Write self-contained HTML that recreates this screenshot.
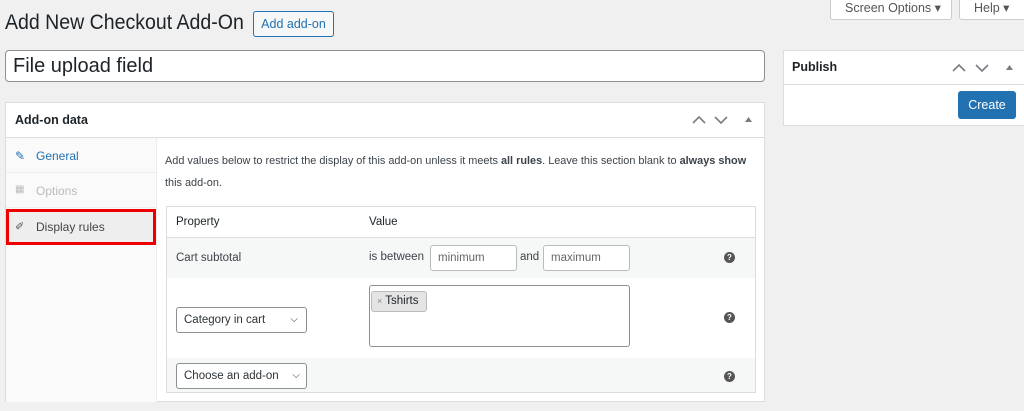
<!DOCTYPE html><html><head><style>
*{box-sizing:border-box;margin:0;padding:0}
body{width:1024px;height:411px;background:#f0f0f1;font-family:"Liberation Sans",sans-serif;color:#1d2327;position:relative;overflow:hidden}
.a{position:absolute}
.btn{border:1px solid #ccc;background:#fff;border-radius:3px}
.q{width:11px;height:11px;border-radius:50%;background:#555;color:#fff;font-size:8px;text-align:center;line-height:11px;font-weight:bold}
</style></head><body>
<div class="a" style="left:5px;top:11px;font-size:21px;color:#1d2327;transform:scaleX(0.93);transform-origin:0 0;white-space:nowrap">Add New Checkout Add-On</div>
<div class="a" style="left:253px;top:11px;width:81px;height:26px;border:1px solid #2271b1;border-radius:3px;background:#f6f7f7;color:#2271b1;font-size:12.5px;line-height:24px;text-align:center">Add add-on</div>
<div class="a btn" style="left:830px;top:-4px;width:122px;height:24px;font-size:12.5px;color:#555;line-height:22px;padding-left:14px">Screen Options ▾</div>
<div class="a btn" style="left:959px;top:-4px;width:70px;height:24px;font-size:12.5px;color:#555;line-height:22px;padding-left:14px">Help ▾</div>
<div class="a" style="left:5px;top:50px;width:760px;height:32px;border:1px solid #8c8f94;border-radius:4px;background:#fff;font-size:20px;line-height:30px;padding-left:7px">File upload field</div>

<svg class="a" style="left:0;top:0" width="1024" height="411">
<g fill="none" stroke="#787c82" stroke-width="1.6">
<polyline points="693,123 699,117 705,123"/><polyline points="715,117 721,123 727,117"/>
<polyline points="953,71 959,65 965,71"/><polyline points="976,65 982,71 988,65"/>
</g>
<g fill="#787c82"><polygon points="745,122 752,122 748.5,117"/><polygon points="1006,70 1013,70 1009.5,65"/></g>
</svg>

<div class="a" style="left:5px;top:102px;width:760px;height:300px;border:1px solid #dcdcde;background:#fff;z-index:-1">
 <div style="height:35px;border-bottom:1px solid #dcdcde;font-weight:bold;font-size:12.5px;line-height:34px;padding-left:9px">Add-on data</div>
 <div class="a" style="left:0;top:35px;width:151px;height:264px;background:#fafafa;border-right:1px solid #eee">
  <div style="height:35px;border-bottom:1px solid #eee;font-size:12px;color:#2271b1;line-height:36px;padding-left:30px;position:relative"><span class="a" style="left:9px;top:0;color:#2271b1">✎</span>General</div>
  <div style="height:35px;border-bottom:1px solid #eee;font-size:12px;color:#bbb;line-height:36px;padding-left:30px;position:relative"><span class="a" style="left:9px;top:-1px;font-size:10px">▦</span>Options</div>
  <div style="height:36px;margin-top:1px;background:#eee;border:3px solid #e00;width:150px;font-size:12px;color:#444;line-height:30px;padding-left:27px;position:relative"><span class="a" style="left:6px;top:0;font-size:11px;color:#555">✐</span>Display rules</div>
 </div>
 <div class="a" style="left:159px;top:47px;font-size:10.9px;color:#3c434a;line-height:22px;width:595px">Add values below to restrict the display of this add-on unless it meets <b>all rules</b>. Leave this section blank to <b>always show</b> this add-on.</div>
 <div class="a" style="left:160px;top:103px;width:590px;height:187px;border:1px solid #dcdcde;font-size:11.5px">
  <div style="height:31px;border-bottom:1px solid #dcdcde;line-height:30px;position:relative"><span class="a" style="left:9px">Property</span><span class="a" style="left:202px">Value</span></div>
  <div style="height:40px;background:#f6f7f7;position:relative;color:#3c434a">
   <span class="a" style="left:9px;top:14px">Cart subtotal</span>
   <span class="a" style="left:202px;top:13px">is between</span>
   <div class="a" style="left:263px;top:7px;width:87px;height:26px;border:1px solid #bbb;border-radius:3px;background:#fff;line-height:24px;padding-left:7px;color:#666">minimum</div>
   <span class="a" style="left:353px;top:13px">and</span>
   <div class="a" style="left:376px;top:7px;width:87px;height:26px;border:1px solid #bbb;border-radius:3px;background:#fff;line-height:24px;padding-left:7px;color:#666">maximum</div>
   <span class="a q" style="left:557px;top:14px">?</span>
  </div>
  <div style="height:80px;position:relative">
   <div class="a" style="left:9px;top:29px;width:131px;height:26px;border:1px solid #8c8f94;border-radius:3px;line-height:24px;padding-left:7px;color:#2c3338">Category in cart<span class="a" style="right:8px;top:0;font-size:10px">⌵</span></div>
   <div class="a" style="left:202px;top:7px;width:261px;height:62px;border:1px solid #8c8f94;border-radius:3px">
    <div class="a" style="left:1px;top:5px;width:56px;height:21px;background:#e4e4e4;border:1px solid #bbb;border-radius:3px;line-height:19px;padding-left:5px"><span style="color:#888;font-size:9px">×</span> Tshirts</div>
   </div>
   <span class="a q" style="left:557px;top:34px">?</span>
  </div>
  <div style="height:34px;background:#f6f7f7;position:relative">
   <div class="a" style="left:9px;top:5px;width:131px;height:26px;border:1px solid #8c8f94;border-radius:3px;background:#fff;line-height:24px;padding-left:7px;color:#2c3338">Choose an add-on<span class="a" style="right:6px;top:0;font-size:10px">⌵</span></div>
   <span class="a q" style="left:557px;top:13px">?</span>
  </div>
 </div>
</div>

<div class="a" style="left:783px;top:50px;width:250px;height:76px;border:1px solid #dcdcde;background:#fff;z-index:-1">
 <div style="height:34px;border-bottom:1px solid #dcdcde;font-weight:bold;font-size:12.5px;line-height:33px;padding-left:8px">Publish</div>
 <div class="a" style="left:174px;top:40px;width:58px;height:28px;background:#2271b1;border-radius:3px;color:#fff;font-size:12.5px;text-align:center;line-height:28px">Create</div>
</div>
</body></html>
